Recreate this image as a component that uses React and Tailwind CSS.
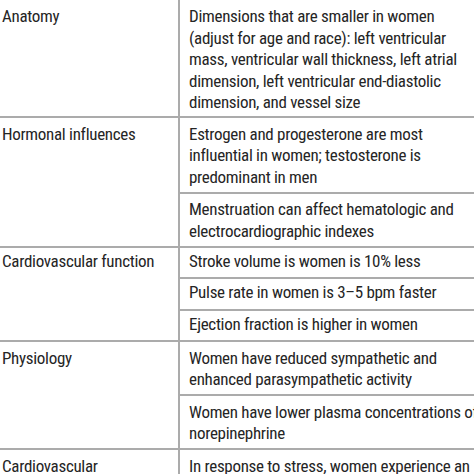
import React from "react";

const rows = [
  {
    label: "Anatomy",
    cells: [
      [
        "Dimensions that are smaller in women",
        "(adjust for age and race): left ventricular",
        "mass, ventricular wall thickness, left atrial",
        "dimension, left ventricular end-diastolic",
        "dimension, and vessel size",
      ],
    ],
  },
  {
    label: "Hormonal influences",
    cells: [
      [
        "Estrogen and progesterone are most",
        "influential in women; testosterone is",
        "predominant in men",
      ],
      ["Menstruation can affect hematologic and", "electrocardiographic indexes"],
    ],
  },
  {
    label: "Cardiovascular function",
    cells: [
      ["Stroke volume is women is 10% less"],
      ["Pulse rate in women is 3–5 bpm faster"],
      ["Ejection fraction is higher in women"],
    ],
  },
  {
    label: "Physiology",
    cells: [
      ["Women have reduced sympathetic and", "enhanced parasympathetic activity"],
      ["Women have lower plasma concentrations of", "norepinephrine"],
    ],
  },
  {
    label: "Cardiovascular",
    cells: [["In response to stress, women experience an", "increased heart rate"]],
  },
];

// vertical padding of a cell, by row and number of lines
function padFor(rowIndex, lines) {
  if (rowIndex === 0) return "pt-[6px] pb-[2.5px]";
  if (lines.length === 1) return "pt-[3px] pb-[5px]";
  return "pt-[5.5px] pb-[3.5px]";
}

function labelPad(rowIndex, firstCell) {
  if (rowIndex === 0) return "pt-[6px]";
  if (firstCell.length === 1) return "pt-[3px]";
  return "pt-[5.5px]";
}

function App() {
  return (
    <div className="w-[474px] h-[474px] overflow-hidden bg-white text-[#252525] text-[17px] leading-[21.5px] tracking-[-0.3px] font-['Roboto_Condensed',Roboto,sans-serif] font-stretch-condensed">
      {rows.map((row, i) => (
        <div
          key={row.label}
          className={
            i > 0
              ? "grid grid-cols-[178px_1fr] border-t-2 border-[#ababab]"
              : "grid grid-cols-[178px_1fr]"
          }
        >
          <div className={`pl-[2px] whitespace-nowrap ${labelPad(i, row.cells[0])}`}>{row.label}</div>
          <div className="border-l-2 border-[#ababab]">
            {row.cells.map((lines, j) => (
              <div
                key={j}
                className={`pl-[9px] whitespace-nowrap ${padFor(i, lines)} ${
                  j > 0 ? "border-t-2 border-[#ababab]" : ""
                }`}
              >
                {lines.map((l) => (
                  <div key={l}>{l}</div>
                ))}
              </div>
            ))}
          </div>
        </div>
      ))}
    </div>
  );
}

export default App;
